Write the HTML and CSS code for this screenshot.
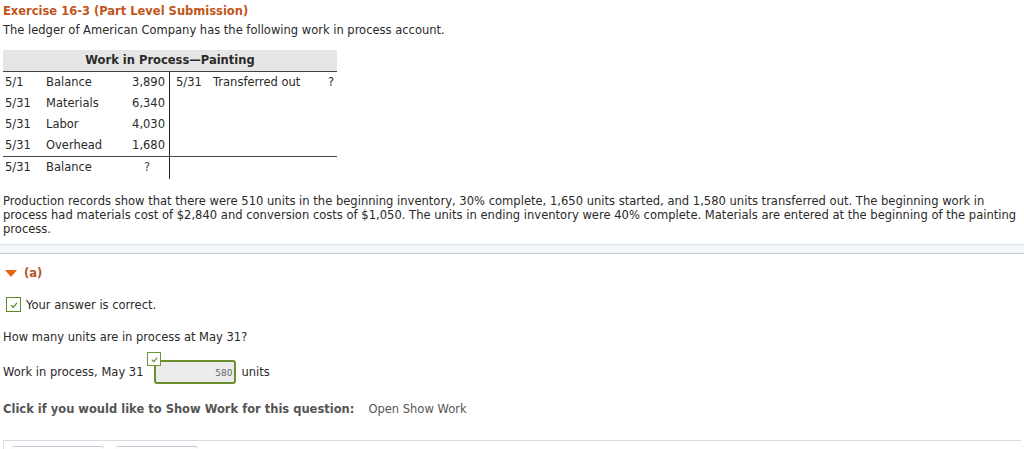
FILE: index.html
```html
<!DOCTYPE html>
<html>
<head>
<meta charset="utf-8">
<link rel="stylesheet" href="styles.css">
</head>
<body>
<div class="page">
  <h1 class="title">Exercise 16-3 (Part Level Submission)</h1>
  <p class="intro">The ledger of American Company has the following work in process account.</p>

  <div class="taccount">
    <div class="t-head">Work in Process—Painting</div>
    <div class="t-body">
      <div class="t-left">
        <div class="t-row"><span class="c-date">5/1</span><span class="c-desc">Balance</span><span class="c-amt">3,890</span></div>
        <div class="t-row"><span class="c-date">5/31</span><span class="c-desc">Materials</span><span class="c-amt">6,340</span></div>
        <div class="t-row"><span class="c-date">5/31</span><span class="c-desc">Labor</span><span class="c-amt">4,030</span></div>
        <div class="t-row"><span class="c-date">5/31</span><span class="c-desc">Overhead</span><span class="c-amt">1,680</span></div>
      </div>
      <div class="t-right">
        <div class="t-row"><span class="c-date r">5/31</span><span class="c-desc r">Transferred out</span><span class="c-q">?</span></div>
      </div>
    </div>
    <div class="t-foot">
      <div class="t-left">
        <div class="t-row"><span class="c-date">5/31</span><span class="c-desc">Balance</span><span class="c-amt q">?</span></div>
      </div>
      <div class="t-right"></div>
    </div>
  </div>

  <p class="problem">Production records show that there were 510 units in the beginning inventory, 30% complete, 1,650 units started, and 1,580 units transferred out. The beginning work in process had materials cost of $2,840 and conversion costs of $1,050. The units in ending inventory were 40% complete. Materials are entered at the beginning of the painting process.</p>

  <div class="divider"></div>

  <div class="part">
    <div class="part-head"><span class="tri"></span><span class="part-label">(a)</span></div>
    <div class="correct"><span class="chk"><svg width="10" height="10" viewBox="0 0 10 10"><path d="M2 5.2 L4.2 7.3 L8 2.8" fill="none" stroke="#5a8a2a" stroke-width="1.3"/></svg></span><span>Your answer is correct.</span></div>
    <p class="question">How many units are in process at May 31?</p>
    <div class="answer-row">
      <span class="answer-label">Work in process, May 31</span>
      <span class="input-wrap">
        <span class="mini-chk"><svg width="9" height="9" viewBox="0 0 10 10"><path d="M2 5.2 L4.2 7.3 L8 2.8" fill="none" stroke="#5a8a2a" stroke-width="1.3"/></svg></span>
        <span class="input">580</span>
      </span>
      <span class="unit">units</span>
    </div>
    <div class="showwork"><span class="sw-label">Click if you would like to Show Work for this question:</span><span class="sw-link">Open Show Work</span></div>
  </div>

  <div class="bottom-box">
    <span class="tab"></span><span class="tab short"></span>
  </div>
</div>
</body>
</html>
```

FILE: styles.css
```css
html, body {
  margin: 0;
  padding: 0;
  background: #fff;
}
body {
  font-family: "DejaVu Sans", Verdana, sans-serif;
  color: #2a2a2a;
  font-size: 11.5px;
  overflow: hidden;
}
.page {
  padding: 0 3px;
}
.title {
  margin: 0;
  padding-top: 3px;
  font-size: 11.5px;
  font-weight: bold;
  color: #c1561b;
  line-height: 16px;
}
.intro {
  margin: 3px 0 0;
  line-height: 16px;
}
.taccount {
  width: 334px;
  margin-top: 12px;
}
.t-head {
  background: #e6e6e6;
  text-align: center;
  font-weight: bold;
  line-height: 21px;
  border-bottom: 1px solid #444;
}
.t-body, .t-foot {
  display: flex;
}
.t-foot {
  border-top: 1px solid #444;
}
.t-left {
  width: 166px;
  border-right: 1px solid #222;
}
.t-right {
  flex: 1;
}
.t-body .t-left { padding-bottom: 0; }
.t-foot .t-left { height: 22px; }
.t-row {
  display: flex;
  height: 21px;
  line-height: 21px;
}
.c-date {
  width: 41px;
  padding-left: 2px;
}
.c-desc {
  width: 62px;
}
.c-amt {
  width: 57px;
  text-align: right;
}
.c-amt.q {
  width: 42px;
  text-align: right;
  color: #444;
}
.c-date.r { width: 37px; padding-left: 6px; }
.c-desc.r { width: 110px; }
.c-q { flex: 1; text-align: right; padding-right: 3px; }

.problem {
  margin: 15px 0 0;
  font-size: 11.55px;
  line-height: 14px;
}
.divider {
  margin: 8px -3px 0;
  height: 8px;
  border-top: 1px solid #dde3ea;
  border-bottom: 1px solid #c8cacc;
  background: #f4f7fa;
}
.part-head {
  margin-top: 12px;
  display: flex;
  align-items: center;
  gap: 7px;
  height: 14px;
}
.tri {
  width: 0;
  height: 0;
  border-left: 6px solid transparent;
  border-right: 6px solid transparent;
  border-top: 7px solid #e8620f;
  margin-left: 2px;
}
.part-label {
  color: #b5552a;
  font-weight: bold;
}
.correct {
  margin-top: 17px;
  display: flex;
  align-items: center;
  gap: 5px;
  margin-left: 3px;
}
.chk {
  width: 13px;
  height: 13px;
  border: 1px solid #5a8a2a;
  display: flex;
  align-items: center;
  justify-content: center;
  background: #fff;
}
.question {
  margin: 17px 0 0;
  line-height: 16px;
}
.answer-row {
  margin-top: 15px;
  display: flex;
  align-items: center;
}
.answer-label {
  margin-right: 11px;
}
.input-wrap {
  position: relative;
  display: inline-block;
}
.mini-chk {
  position: absolute;
  left: -7px;
  top: -8px;
  width: 12px;
  height: 12px;
  border: 1px solid #6b9a3a;
  background: #fff;
  display: flex;
  align-items: center;
  justify-content: center;
}
.input {
  display: block;
  width: 76px;
  padding-right: 2px;
  height: 20px;
  border: 2px solid #6b8f2a;
  border-radius: 3px;
  background: #ececec;
  text-align: right;
  font-size: 9px;
  line-height: 22px;
  color: #666;
}
.unit {
  margin-left: 5px;
}
.showwork {
  margin-top: 18px;
  display: flex;
  gap: 14px;
  color: #555;
}
.sw-label {
  font-weight: bold;
}
.sw-link {
  color: #555;
}
.bottom-box {
  margin: 24px 0 0;
  height: 20px;
  border-top: 1px solid #d7dbe3;
  border-left: 1px solid #d7dbe3;
  padding: 5px 0 0 8px;
  display: flex;
  gap: 12px;
}
.tab {
  width: 92px;
  height: 8px;
  border-top: 1px solid #c4cad2;
  border-radius: 3px 3px 0 0;
}
.tab.short { width: 82px; }
```
